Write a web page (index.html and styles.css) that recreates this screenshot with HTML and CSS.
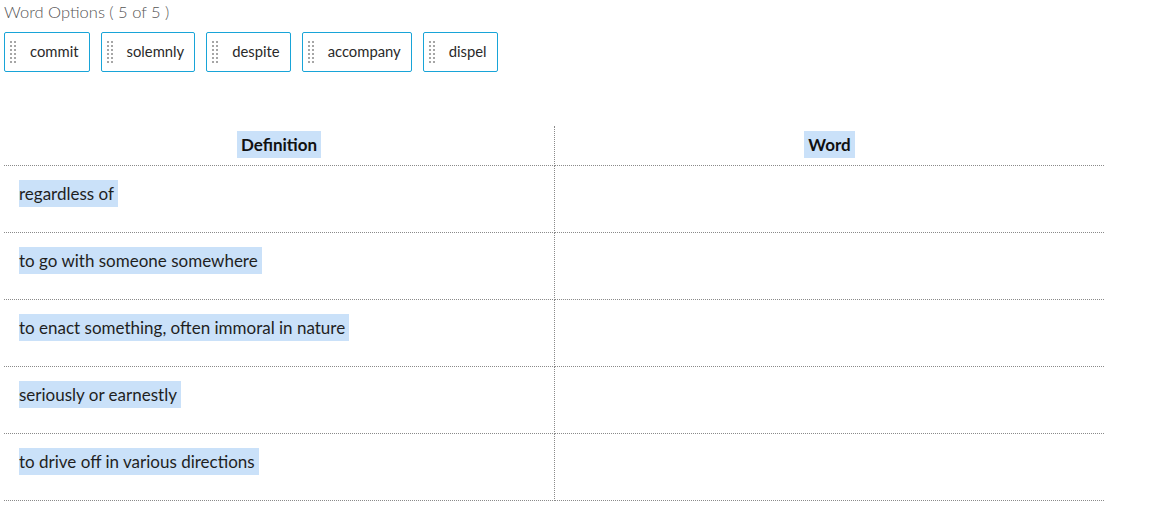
FILE: index.html
```html
<!DOCTYPE html>
<html>
<head>
<meta charset="utf-8">
<link rel="stylesheet" href="styles.css">
</head>
<body>
<div class="title">Word Options ( 5 of 5 )</div>
<div class="chips">
  <div class="chip"><svg class="handle" width="6" height="22" viewBox="0 0 6 22"><g fill="#a6a6a6"><rect x="0" y="0" width="2" height="2"/><rect x="4" y="0" width="2" height="2"/><rect x="0" y="4" width="2" height="2"/><rect x="4" y="4" width="2" height="2"/><rect x="0" y="8" width="2" height="2"/><rect x="4" y="8" width="2" height="2"/><rect x="0" y="12" width="2" height="2"/><rect x="4" y="12" width="2" height="2"/><rect x="0" y="16" width="2" height="2"/><rect x="4" y="16" width="2" height="2"/><rect x="0" y="20" width="2" height="2"/><rect x="4" y="20" width="2" height="2"/></g></svg><span class="chip-label">commit</span></div>
  <div class="chip"><svg class="handle" width="6" height="22" viewBox="0 0 6 22"><g fill="#a6a6a6"><rect x="0" y="0" width="2" height="2"/><rect x="4" y="0" width="2" height="2"/><rect x="0" y="4" width="2" height="2"/><rect x="4" y="4" width="2" height="2"/><rect x="0" y="8" width="2" height="2"/><rect x="4" y="8" width="2" height="2"/><rect x="0" y="12" width="2" height="2"/><rect x="4" y="12" width="2" height="2"/><rect x="0" y="16" width="2" height="2"/><rect x="4" y="16" width="2" height="2"/><rect x="0" y="20" width="2" height="2"/><rect x="4" y="20" width="2" height="2"/></g></svg><span class="chip-label">solemnly</span></div>
  <div class="chip"><svg class="handle" width="6" height="22" viewBox="0 0 6 22"><g fill="#a6a6a6"><rect x="0" y="0" width="2" height="2"/><rect x="4" y="0" width="2" height="2"/><rect x="0" y="4" width="2" height="2"/><rect x="4" y="4" width="2" height="2"/><rect x="0" y="8" width="2" height="2"/><rect x="4" y="8" width="2" height="2"/><rect x="0" y="12" width="2" height="2"/><rect x="4" y="12" width="2" height="2"/><rect x="0" y="16" width="2" height="2"/><rect x="4" y="16" width="2" height="2"/><rect x="0" y="20" width="2" height="2"/><rect x="4" y="20" width="2" height="2"/></g></svg><span class="chip-label">despite</span></div>
  <div class="chip"><svg class="handle" width="6" height="22" viewBox="0 0 6 22"><g fill="#a6a6a6"><rect x="0" y="0" width="2" height="2"/><rect x="4" y="0" width="2" height="2"/><rect x="0" y="4" width="2" height="2"/><rect x="4" y="4" width="2" height="2"/><rect x="0" y="8" width="2" height="2"/><rect x="4" y="8" width="2" height="2"/><rect x="0" y="12" width="2" height="2"/><rect x="4" y="12" width="2" height="2"/><rect x="0" y="16" width="2" height="2"/><rect x="4" y="16" width="2" height="2"/><rect x="0" y="20" width="2" height="2"/><rect x="4" y="20" width="2" height="2"/></g></svg><span class="chip-label">accompany</span></div>
  <div class="chip"><svg class="handle" width="6" height="22" viewBox="0 0 6 22"><g fill="#a6a6a6"><rect x="0" y="0" width="2" height="2"/><rect x="4" y="0" width="2" height="2"/><rect x="0" y="4" width="2" height="2"/><rect x="4" y="4" width="2" height="2"/><rect x="0" y="8" width="2" height="2"/><rect x="4" y="8" width="2" height="2"/><rect x="0" y="12" width="2" height="2"/><rect x="4" y="12" width="2" height="2"/><rect x="0" y="16" width="2" height="2"/><rect x="4" y="16" width="2" height="2"/><rect x="0" y="20" width="2" height="2"/><rect x="4" y="20" width="2" height="2"/></g></svg><span class="chip-label">dispel</span></div>
</div>
<table class="match">
  <thead>
    <tr><th class="col-def"><span class="hl">Definition</span></th><th class="col-word"><span class="hl">Word</span></th></tr>
  </thead>
  <tbody>
    <tr><td class="col-def"><span class="hl">regardless of</span></td><td class="col-word"></td></tr>
    <tr><td class="col-def"><span class="hl">to go with someone somewhere</span></td><td class="col-word"></td></tr>
    <tr><td class="col-def"><span class="hl">to enact something, often immoral in nature</span></td><td class="col-word"></td></tr>
    <tr><td class="col-def"><span class="hl">seriously or earnestly</span></td><td class="col-word"></td></tr>
    <tr><td class="col-def"><span class="hl">to drive off in various directions</span></td><td class="col-word"></td></tr>
  </tbody>
</table>
</body>
</html>
```
FILE: styles.css
```css
body {
  margin: 0;
  padding: 0 4px;
  font-family: "Lato", "Liberation Sans", sans-serif;
  color: #1f1f1f;
  background: #fff;
}
.title {
  font-size: 16.5px;
  line-height: 24px;
  color: #555;
  font-weight: 300;
}
.chips {
  display: flex;
  gap: 11px;
  margin-top: 8px;
}
.chip {
  display: flex;
  align-items: center;
  height: 38px;
  border: 1px solid #18a4d8;
  border-radius: 2px;
  padding: 0 10px 0 5px;
}
.handle {
  display: block;
  margin-right: 14px;
  flex: none;
}
.chip-label {
  font-size: 14.8px;
  color: #2a2a2a;
  position: relative;
  top: -1px;
}
.match {
  margin-top: 54px;
  width: 1100px;
  border-collapse: collapse;
  table-layout: fixed;
}
.match th {
  height: 37px;
  font-size: 17px;
  font-weight: 700;
  color: #111;
  border-bottom: 1px dotted #8a8a8a;
  text-align: center;
  vertical-align: middle;
  padding: 0 0 2px 0;
}
.match td {
  height: 54px;
  border-bottom: 1px dotted #8a8a8a;
  padding: 0 0 12px 15px;
  vertical-align: middle;
  font-size: 17px;
}
.col-def {
  width: 550px;
  border-right: 1px dotted #8a8a8a;
}
.hl {
  background: #cae1f9;
  display: inline-block;
  line-height: 27px;
  padding-right: 4px;
}
th .hl {
  padding: 0 4px;
}
```
